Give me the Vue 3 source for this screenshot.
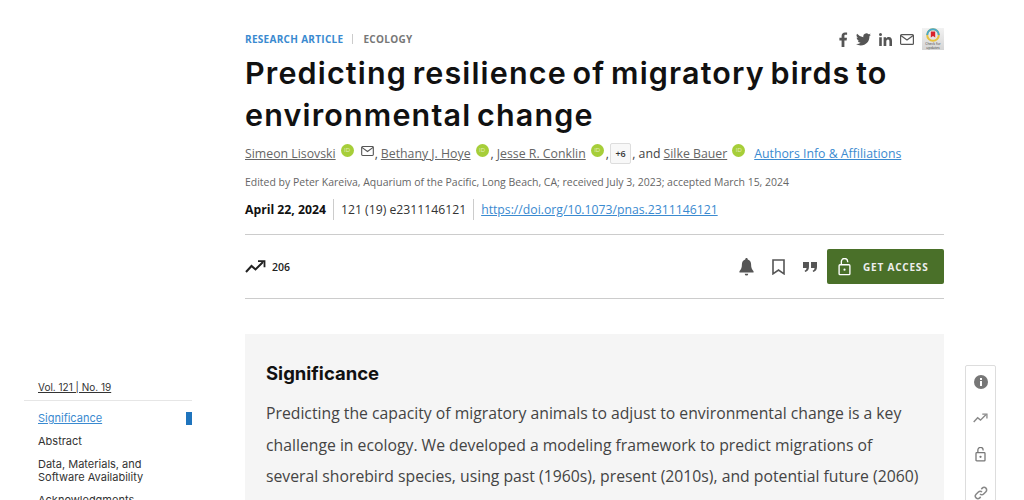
<template>
  <div class="page">
    <aside class="toc">
      <a class="issue">Vol. 121 | No. 19</a>
      <ul class="toc-list">
        <li v-for="item in tocItems" :key="item.label" :class="{ active: item.active }">
          <span>{{ item.label }}</span>
        </li>
      </ul>
    </aside>

    <main class="article">
      <div class="top-row">
        <div class="kicker">
          <span class="kind">RESEARCH ARTICLE</span>
          <span class="kicker-sep"></span>
          <span class="topic">ECOLOGY</span>
        </div>
        <div class="share">
          <svg width="9" height="15" viewBox="0 0 9 15"><path fill="#555" d="M2.6 15V8.4H.4V5.8h2.2V3.9C2.6 1.600 4 .4 6 .4c1 0 1.800.1 2.100.1v2.300H6.700c-1.100 0-1.300.5-1.300 1.300v1.700H8l-.4 2.600H5.400V15z"/></svg>
          <svg width="15" height="13" viewBox="0 0 24 20"><path fill="#555" d="M24 2.400a10 10 0 0 1-2.800.8A5 5 0 0 0 23.300.5a10 10 0 0 1-3.100 1.200 4.900 4.900 0 0 0-8.400 4.500A14 14 0 0 1 1.700.9a4.900 4.900 0 0 0 1.500 6.600 4.900 4.900 0 0 1-2.200-.6c0 2.400 1.700 4.400 3.900 4.900a5 5 0 0 1-2.200.1 4.900 4.900 0 0 0 4.600 3.400A9.900 9.900 0 0 1 0 17.300 14 14 0 0 0 7.500 19.500c9.100 0 14.300-7.700 14-14.600A10 10 0 0 0 24 2.400z"/></svg>
          <svg width="13" height="13" viewBox="0 0 13 13"><path fill="#555" d="M.2 4.300h2.600V13H.2zM1.500 0a1.500 1.500 0 1 1 0 3 1.500 1.500 0 0 1 0-3zM4.600 4.300h2.500v1.200c.4-.7 1.300-1.400 2.600-1.400 2.700 0 3.300 1.700 3.300 4V13h-2.600V8.700c0-1 0-2.300-1.400-2.300s-1.700 1.100-1.700 2.200V13H4.600z"/></svg>
          <svg width="14" height="11" viewBox="0 0 14 11" fill="none" stroke="#555" stroke-width="1.200"><rect x=".6" y=".6" width="12.800" height="9.800" rx="1"/><path d="M.8 1.500 7 6l6.200-4.500"/></svg>
          <div class="crossmark">
            <svg width="14" height="14" viewBox="0 0 14 14"><circle cx="7" cy="7" r="5.800" fill="none" stroke="#e8c33e" stroke-width="2"/><path d="M1.200 7a5.800 5.800 0 0 1 11.600 0" fill="none" stroke="#49a9c9" stroke-width="2"/><path d="M4.800 3.500h4.400v6L7 8 4.800 9.500z" fill="#d8232a"/></svg>
            <span>Check for<br />updates</span>
          </div>
        </div>
      </div>

      <h1>Predicting resilience of migratory birds to environmental change</h1>

      <div class="authors">
        <template v-for="(a, i) in authors" :key="a.name">
          <a class="author">{{ a.name }}</a>
          <span class="orcid">ID</span>
          <svg v-if="a.mail" class="mail" width="13" height="10" viewBox="0 0 14 11" fill="none" stroke="#555" stroke-width="1.200"><rect x=".6" y=".6" width="12.800" height="9.800" rx="1"/><path d="M.8 1.500 7 6l6.200-4.500"/></svg>
          <span v-if="i < 2" class="comma">,</span>
        </template>
        <span class="comma tight">,</span>
        <span class="more">+6</span>
        <span class="comma">, and</span>
        <a class="author">Silke Bauer</a>
        <span class="orcid">ID</span>
        <a class="info-link">Authors Info &amp; Affiliations</a>
      </div>

      <p class="edited">Edited by Peter Kareiva, Aquarium of the Pacific, Long Beach, CA; received July 3, 2023; accepted March 15, 2024</p>

      <div class="meta">
        <strong>April 22, 2024</strong>
        <span>121 (19) e2311146121</span>
        <a>https://doi.org/10.1073/pnas.2311146121</a>
      </div>

      <div class="actions">
        <div class="metric">
          <svg width="21" height="13" viewBox="0 0 21 13" fill="none" stroke="#222" stroke-width="2"><path d="M1 12l5.500-6 4 3.500L18 2"/><path d="M13 1.200h6.500v6" stroke-width="1.800"/></svg>
          <span>206</span>
        </div>
        <div class="action-icons">
          <svg width="15" height="18" viewBox="0 0 17 19" preserveAspectRatio="none"><path fill="#555" d="M8.500 0c.9 0 1.400.6 1.400 1.500 2.500.6 3.800 2.700 3.800 5.200 0 3.700.8 5.200 2.800 7.300v1.400H.5V14c2-2.100 2.800-3.600 2.800-7.300 0-2.500 1.300-4.600 3.800-5.200C7.100.6 7.600 0 8.500 0zM6.500 16.500h4a2 2 0 0 1-4 0z"/></svg>
          <svg width="13" height="16" viewBox="0 0 13 16" fill="none" stroke="#555" stroke-width="1.600"><path d="M1 1h11v13.800L6.500 11 1 14.800z"/></svg>
          <svg width="14" height="10" viewBox="0 0 15 11" preserveAspectRatio="none"><path fill="#555" d="M0 0h6.400v5.600c0 2.800-1.400 4.600-4 5.400l-.7-1.400C3 9 3.700 8 3.800 6.600H0zM8.600 0H15v5.600c0 2.800-1.400 4.600-4 5.400l-.7-1.400c1.300-.6 2-1.600 2.100-3H8.600z"/></svg>
          <button class="access">
            <svg width="13" height="18" viewBox="0 0 14 20" fill="none" stroke="#fff" stroke-width="1.500"><rect x="1" y="7.500" width="12" height="11" rx="1"/><path d="M3.500 7.500V4a3.500 3.500 0 0 1 7 0v.8"/><circle cx="7" cy="13" r="1.200" fill="#fff" stroke="none"/></svg>
            GET ACCESS
          </button>
        </div>
      </div>

      <section class="significance">
        <h2>Significance</h2>
        <p>Predicting the capacity of migratory animals to adjust to environmental change is a key challenge in ecology. We developed a modeling framework to predict migrations of several shorebird species, using past (1960s), present (2010s), and potential future (2060)</p>
      </section>
    </main>

    <aside class="rail">
      <div class="rail-box">
        <svg width="14" height="14" viewBox="0 0 14 14"><circle cx="7" cy="7" r="7" fill="#777"/><rect x="6" y="6" width="2" height="5" fill="#fff"/><rect x="6" y="3" width="2" height="2" fill="#fff"/></svg>
        <svg width="15" height="10" viewBox="0 0 21 13" fill="none" stroke="#888" stroke-width="2"><path d="M1 12l5.500-6 4 3.500L18 2"/><path d="M13 1.200h6.500v6" stroke-width="1.800"/></svg>
        <svg width="11" height="15" viewBox="0 0 14 20" fill="none" stroke="#777" stroke-width="1.700"><rect x="1" y="7.500" width="12" height="11" rx="1"/><path d="M3.500 7.500V4a3.500 3.500 0 0 1 7 0v.8"/><circle cx="7" cy="13" r="1.500" fill="#777" stroke="none"/></svg>
        <svg width="14" height="14" viewBox="0 0 14 14" fill="none" stroke="#888" stroke-width="1.500"><path d="M6 8a2.500 2.500 0 0 0 3.600 0l2.300-2.300a2.500 2.500 0 0 0-3.600-3.600L7.300 3.100"/><path d="M8 6a2.500 2.500 0 0 0-3.600 0L2.100 8.300a2.500 2.500 0 0 0 3.600 3.600l1-1"/></svg>
      </div>
    </aside>
  </div>
</template>

<script setup>
const tocItems = [
  { label: 'Significance', active: true },
  { label: 'Abstract' },
  { label: 'Data, Materials, and Software Availability' },
  { label: 'Acknowledgments' },
]

const authors = [
  { name: 'Simeon Lisovski', mail: true },
  { name: 'Bethany J. Hoye' },
  { name: 'Jesse R. Conklin' },
]
</script>

<style>
html, body { margin: 0; height: 500px; overflow: hidden; background: #fff; }
</style>

<style scoped>
.page { height: 500px; overflow: hidden; display: grid; grid-template-columns: 245px 699px 80px; font-family: "Open Sans", sans-serif; color: #333; }

.toc { padding: 380px 0 0 24px; width: 168px; font-family: Inter, sans-serif; font-size: 11px; color: #333; }
.issue { display: block; padding: 0 0 6px 14px; font-size: 10px; text-decoration: underline; border-bottom: 1px solid #e6e6e6; line-height: 14px; }
.toc-list { list-style: none; margin: 0; padding: 11px 0 0 14px; }
.toc-list li { margin-bottom: 10px; line-height: 13px; width: 112px; }
.toc-list li.active { color: #3a8ad0; text-decoration: underline; position: relative; width: auto; }
.toc-list li.active::after { content: ""; position: absolute; right: 0; top: 0; width: 6px; height: 13px; background: #1f74bd; }

.article { min-width: 0; padding-top: 32px; }
.top-row { display: flex; justify-content: space-between; align-items: flex-start; height: 20px; }
.kicker { display: flex; align-items: center; font-size: 10px; font-weight: 700; letter-spacing: .3px; line-height: 14px; }
.kind { color: #3a8ad0; }
.kicker-sep { width: 1px; height: 10px; background: #ccc; margin: 0 10px 0 9px; }
.topic { color: #777; }
.share { display: flex; align-items: center; gap: 8px; margin-top: -4px; }
.crossmark { width: 22px; height: 22px; background: linear-gradient(#f2f2f2, #d5d5d5); display: flex; flex-direction: column; align-items: center; font-size: 3.500px; line-height: 3.500px; text-align: center; color: #444; }

h1 { margin: 0; font-family: Inter, sans-serif; font-weight: 600; font-size: 30.500px; line-height: 42px; color: #111; letter-spacing: 1.150px; word-spacing: -3.100px; }

.authors { display: flex; align-items: center; margin-top: 5px; height: 24px; font-size: 12.300px; color: #444; white-space: nowrap; }
.author { text-decoration: underline; color: #666; }
.orcid { width: 13px; height: 13px; border-radius: 50%; background: #a6ce39; color: #e6f0c0; font-size: 6px; line-height: 13px; text-align: center; margin: -5px 2px 0 5px; }
.mail { margin: -5px 1px 0 5px; }
.comma { margin-right: 3px; }
.comma.tight { margin-right: 1px; }
.more { font-size: 9px; font-weight: 600; border: 1px solid #ddd; border-radius: 2px; background: #f8f8f8; padding: 0 4.500px; height: 19px; line-height: 19px; margin: 0 1px 0 0; color: #333; }
.info-link { margin-left: 7px; color: #3a8ad0; text-decoration: underline; }

.edited { margin: 9px 0 0; font-size: 10.470px; line-height: 16px; color: #666; }

.meta { display: flex; align-items: center; margin-top: 9px; font-size: 12.230px; line-height: 21px; color: #333; }
.meta strong { color: #111; padding-right: 7px; border-right: 1px solid #ccc; }
.meta span { padding: 0 7px; border-right: 1px solid #ccc; }
.meta a { margin-left: 7px; color: #3a8ad0; text-decoration: underline; }

.actions { margin-top: 14px; height: 63px; border-top: 1px solid #ccc; border-bottom: 1px solid #ccc; display: flex; justify-content: space-between; align-items: center; }
.metric { display: flex; align-items: center; gap: 6px; font-size: 10.500px; font-weight: 600; color: #222; }
.action-icons { display: flex; align-items: center; gap: 18px; }
.access { display: flex; align-items: center; gap: 12px; width: 117px; height: 35px; margin-left: -8px; padding: 0 0 0 11px; border: 0; border-radius: 2px; background: #4a7029; color: #eee; font-family: inherit; font-size: 10px; font-weight: 700; letter-spacing: .8px; }

.significance { margin-top: 35px; background: #f5f5f5; padding: 25px 21px 24px; }
h2 { margin: 0; font-family: Inter, sans-serif; font-weight: 700; font-size: 18.500px; line-height: 28px; color: #111; }
.significance p { margin: 11px 0 0; font-size: 15.750px; line-height: 31.500px; color: #444; }

.rail { padding: 365px 0 0 21px; }
.rail-box { width: 31px; height: 150px; box-sizing: border-box; border: 1px solid #ddd; border-radius: 2px; display: flex; flex-direction: column; align-items: center; gap: 24px; padding-top: 9px; background: #fff; }
</style>
